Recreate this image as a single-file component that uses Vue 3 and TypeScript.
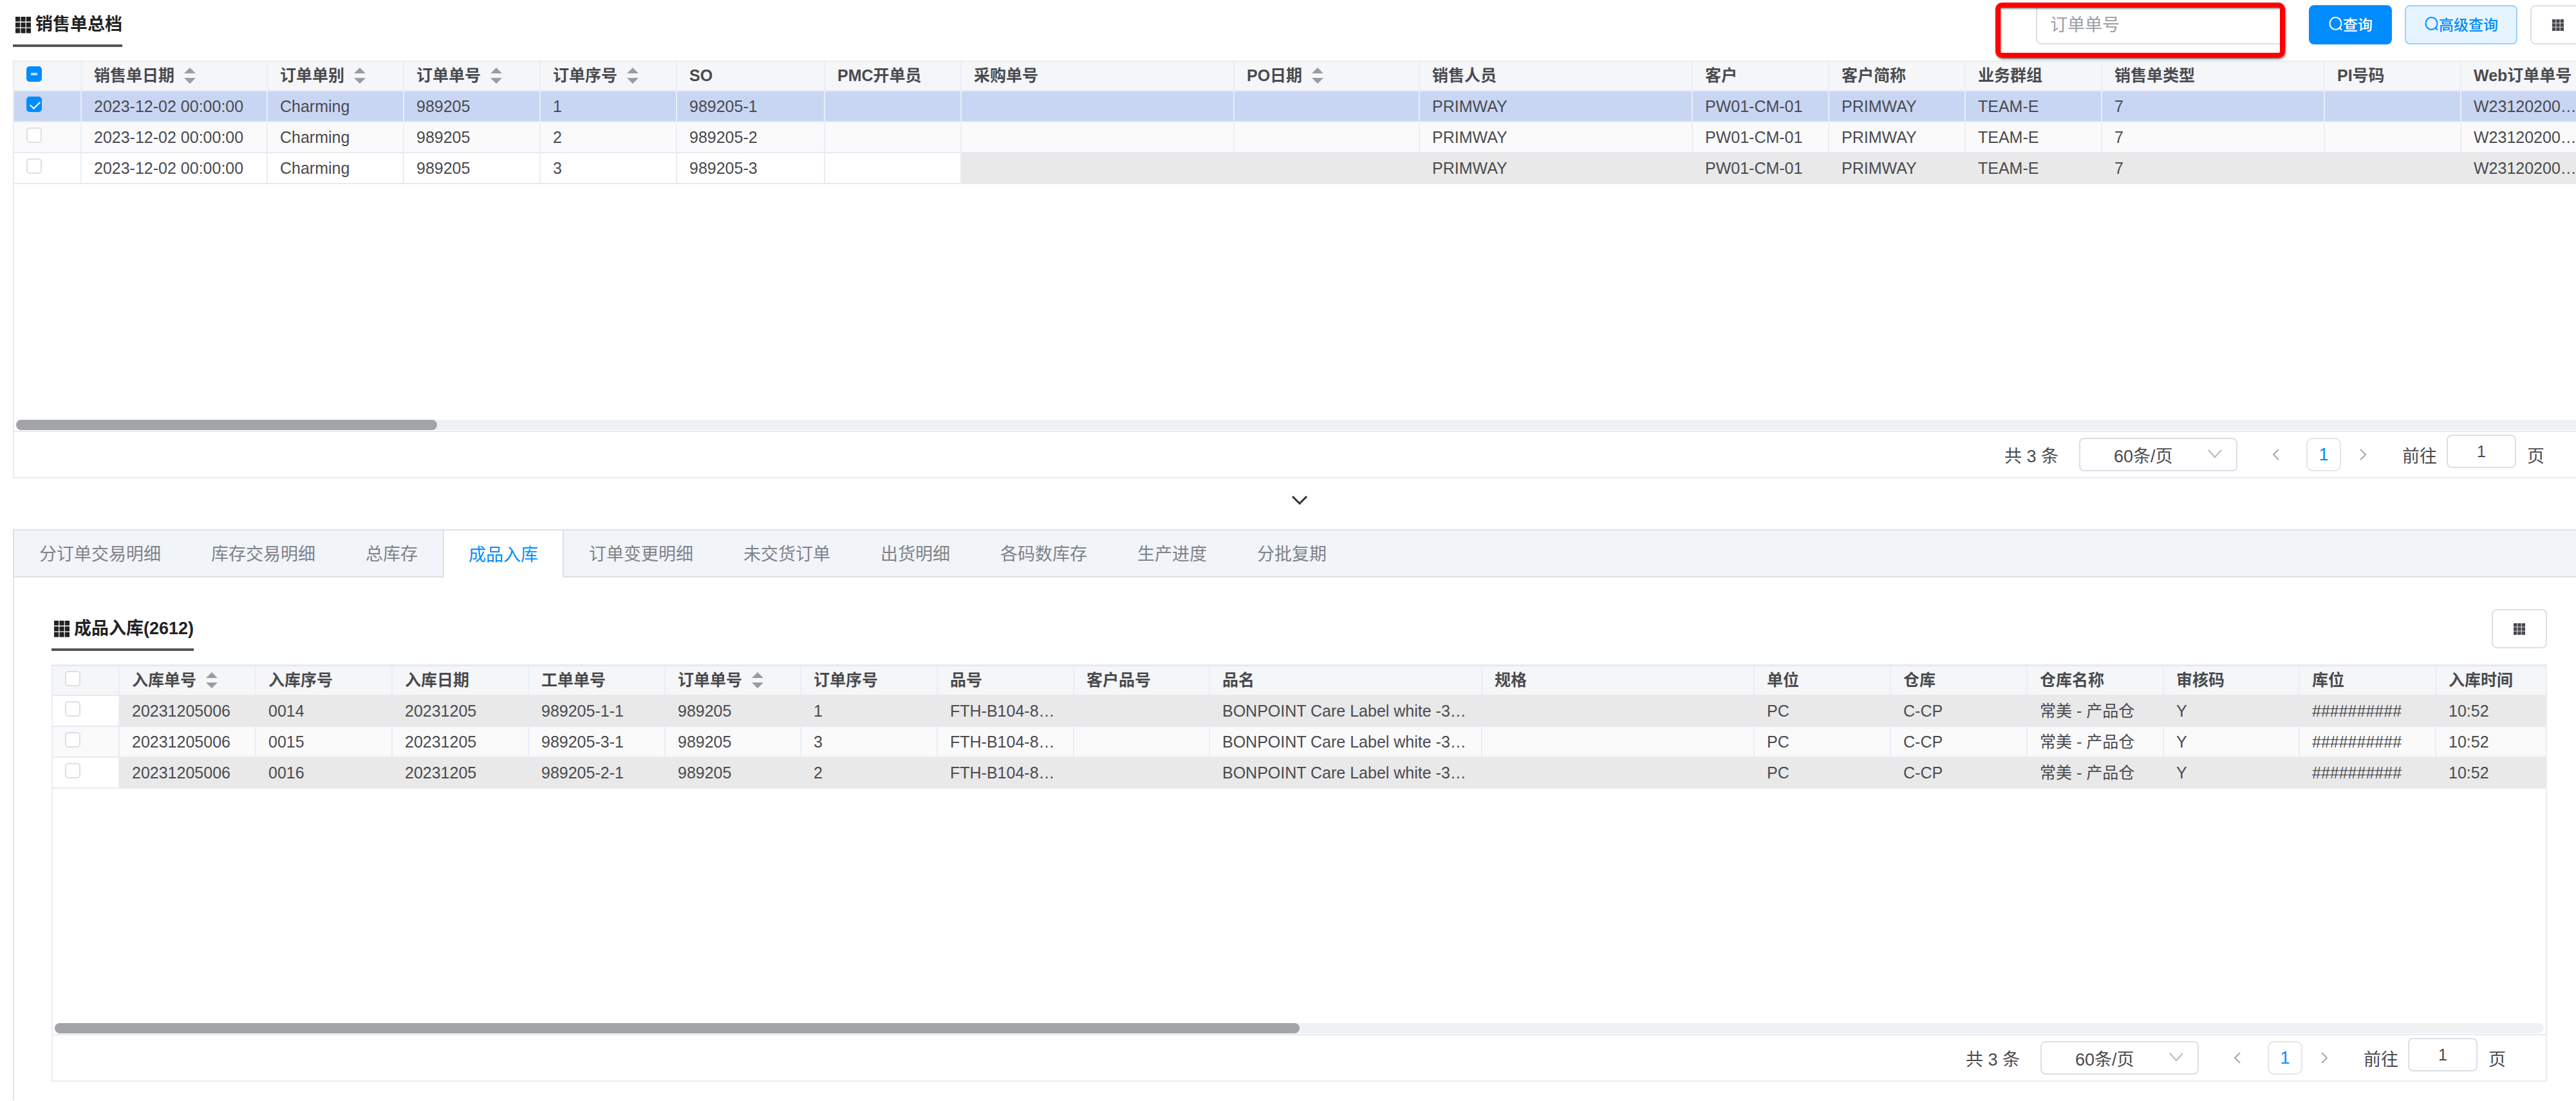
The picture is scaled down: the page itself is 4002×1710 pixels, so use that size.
<script setup lang="ts">
import { ref } from 'vue'

interface Column {
  title: string
  width: number
  sortable?: boolean
}

interface Row {
  cells: string[]
  checked: boolean
  state: 'selected' | 'striped' | 'plain'
  /** index of the first read-only (greyed) column */
  lockedFrom?: number
}

interface Grid {
  id: string
  title: string
  selectWidth: number
  columns: Column[]
  rows: Row[]
  partlySelected: boolean
  thumb: number
}

const orderColumns: Column[] = [
  { title: '销售单日期', width: 289, sortable: true },
  { title: '订单单别', width: 212, sortable: true },
  { title: '订单单号', width: 212, sortable: true },
  { title: '订单序号', width: 212, sortable: true },
  { title: 'SO', width: 230 },
  { title: 'PMC开单员', width: 212 },
  { title: '采购单号', width: 424 },
  { title: 'PO日期', width: 288, sortable: true },
  { title: '销售人员', width: 424 },
  { title: '客户', width: 212 },
  { title: '客户简称', width: 212 },
  { title: '业务群组', width: 212 },
  { title: '销售单类型', width: 346 },
  { title: 'PI号码', width: 212 },
  { title: 'Web订单单号', width: 212 },
]

const orderCells = (n: number): string[] => [
  '2023-12-02 00:00:00', 'Charming', '989205', `${n}`, `989205-${n}`, '', '', '',
  'PRIMWAY', 'PW01-CM-01', 'PRIMWAY', 'TEAM-E', '7', '', 'W23120200…',
]

const stockColumns: Column[] = [
  { title: '入库单号', width: 212, sortable: true },
  { title: '入库序号', width: 212 },
  { title: '入库日期', width: 212 },
  { title: '工单单号', width: 212 },
  { title: '订单单号', width: 211, sortable: true },
  { title: '订单序号', width: 212 },
  { title: '品号', width: 212 },
  { title: '客户品号', width: 211 },
  { title: '品名', width: 423 },
  { title: '规格', width: 423 },
  { title: '单位', width: 212 },
  { title: '仓库', width: 212 },
  { title: '仓库名称', width: 212 },
  { title: '审核码', width: 211 },
  { title: '库位', width: 212 },
  { title: '入库时间', width: 212 },
]

const stockCells = (serial: string, job: string, line: string): string[] => [
  '20231205006', serial, '20231205', job, '989205', line, 'FTH-B104-8…', '',
  'BONPOINT Care Label white -3…', '', 'PC', 'C-CP', '常美 - 产品仓', 'Y', '##########', '10:52',
]

const grids = ref<Grid[]>([
  {
    id: 'orders',
    title: '销售单总档',
    selectWidth: 105,
    columns: orderColumns,
    partlySelected: true,
    thumb: 16.4,
    rows: [
      { cells: orderCells(1), checked: true, state: 'selected' },
      { cells: orderCells(2), checked: false, state: 'striped' },
      { cells: orderCells(3), checked: false, state: 'plain', lockedFrom: 6 },
    ],
  },
  {
    id: 'stock',
    title: '成品入库(2612)',
    selectWidth: 104,
    columns: stockColumns,
    partlySelected: false,
    thumb: 50,
    rows: [
      { cells: stockCells('0014', '989205-1-1', '1'), checked: false, state: 'plain', lockedFrom: 0 },
      { cells: stockCells('0015', '989205-3-1', '3'), checked: false, state: 'striped' },
      { cells: stockCells('0016', '989205-2-1', '2'), checked: false, state: 'plain', lockedFrom: 0 },
    ],
  },
])

const tabs = [
  '分订单交易明细', '库存交易明细', '总库存', '成品入库', '订单变更明细',
  '未交货订单', '出货明细', '各码数库存', '生产进度', '分批复期',
]
const activeTab = ref('成品入库')
const orderNo = ref('')

const tableWidth = (g: Grid): string =>
  `${g.columns.reduce((sum, c) => sum + c.width, g.selectWidth)}px`
</script>

<template>
  <main class="page">
    <div class="stack">
      <template v-for="(g, gi) in grids" :key="g.id">
        <template v-if="gi === 1">
          <button class="collapse" aria-label="收起">
            <svg viewBox="0 0 26 15" width="26" height="15"><path d="M2 2l11 11L24 2" fill="none" stroke="#303133" stroke-width="3" /></svg>
          </button>
          <nav class="tabs" role="tablist">
            <button
              v-for="t in tabs"
              :key="t"
              role="tab"
              class="tab"
              :class="{ active: t === activeTab }"
              :aria-selected="t === activeTab"
              @click="activeTab = t"
            >{{ t }}</button>
          </nav>
        </template>

        <section :class="['panel', g.id]">
          <header class="toolbar">
            <h2 class="title">
              <svg class="title-icon" viewBox="0 0 27 27">
                <path d="M4 1h7.200v7.600H4zM12.400 1h7.200v7.600h-7.200zM20.800 1H28v7.600h-7.200zM4 9.900h7.200v7.600H4zM12.400 9.900h7.200v7.600h-7.200zM20.800 9.900H28v7.600h-7.200zM4 18.800h7.200v7.600H4zM12.400 18.800h7.200v7.600h-7.200zM20.800 18.800H28v7.600h-7.200z" fill="#222" />
              </svg>
              <span>{{ g.title }}</span>
            </h2>
            <div class="actions">
              <template v-if="gi === 0">
                <div class="search">
                  <input v-model="orderNo" class="search-input" type="text" placeholder="订单单号" aria-label="订单单号" />
                  <span class="marker"></span>
                </div>
                <button class="btn primary">
                  <svg viewBox="0 0 23 23" width="23" height="23"><path d="M17.500 18l3.500 3.500M11.500 2a9 9.500 0 1 1 0 19a9 9.500 0 1 1 0-19z" fill="none" stroke="currentColor" stroke-width="2" /></svg>查询
                </button>
                <button class="btn plain">
                  <svg viewBox="0 0 23 23" width="23" height="23"><path d="M17.500 18l3.500 3.500M11.500 2a9 9.500 0 1 1 0 19a9 9.500 0 1 1 0-19z" fill="none" stroke="currentColor" stroke-width="2" /></svg>高级查询
                </button>
              </template>
              <button class="btn square" aria-label="列设置">
                <svg viewBox="0 0 18 18" width="18" height="18">
                  <path d="M0 0h5.400v5.400H0zM6.300 0h5.400v5.400H6.300zM12.600 0H18v5.400h-5.400zM0 6.300h5.400v5.400H0zM6.300 6.300h5.400v5.400H6.300zM12.600 6.300H18v5.400h-5.400zM0 12.600h5.400V18H0zM6.300 12.600h5.400V18H6.300zM12.600 12.600H18V18h-5.400z" fill="#46484c" />
                </svg>
              </button>
            </div>
          </header>

          <div class="grid">
            <div class="grid-body">
              <table :style="{ width: tableWidth(g) }">
                <colgroup>
                  <col :style="{ width: g.selectWidth + 'px' }" />
                  <col v-for="c in g.columns" :key="c.title" :style="{ width: c.width + 'px' }" />
                </colgroup>
                <thead>
                  <tr>
                    <th class="pick"><input type="checkbox" class="check" aria-label="全选" :indeterminate="g.partlySelected" /></th>
                    <th v-for="c in g.columns" :key="c.title" scope="col">
                      <div class="head">
                        <span>{{ c.title }}</span>
                        <button v-if="c.sortable" class="sort" :aria-label="c.title + '排序'">
                          <svg viewBox="0 0 18 25" width="18" height="25"><path d="M9 0l9 9H0zM9 25l9-9H0z" fill="#999ca3" /></svg>
                        </button>
                      </div>
                    </th>
                  </tr>
                </thead>
                <tbody>
                  <tr v-for="(r, ri) in g.rows" :key="ri" :class="r.state">
                    <td class="pick"><input v-model="r.checked" type="checkbox" class="check" :aria-label="'选择第' + (ri + 1) + '行'" /></td>
                    <td
                      v-for="(cell, ci) in r.cells"
                      :key="ci"
                      :class="{ locked: r.lockedFrom !== undefined && ci >= r.lockedFrom }"
                    >{{ cell }}</td>
                  </tr>
                </tbody>
              </table>
              <div class="track"><div class="thumb" :style="{ width: g.thumb + '%' }"></div></div>
            </div>

            <footer class="pager">
              <span class="total">共 3 条</span>
              <span class="size">
                <select aria-label="每页条数"><option>60条/页</option></select>
                <svg viewBox="0 0 22 14" width="22" height="14"><path d="M1 1l10 11L21 1" fill="none" stroke="#b4b8c0" stroke-width="2" /></svg>
              </span>
              <button class="step prev" aria-label="上一页"><svg viewBox="0 0 10 18" width="10" height="18"><path d="M9 1L1 9l8 8" fill="none" stroke="#a4a7ad" stroke-width="2" /></svg></button>
              <button class="current">1</button>
              <button class="step next" aria-label="下一页"><svg viewBox="0 0 10 18" width="10" height="18"><path d="M1 1l8 8l-8 8" fill="none" stroke="#a4a7ad" stroke-width="2" /></svg></button>
              <label :for="g.id + '-page'">前往</label>
              <input :id="g.id + '-page'" class="goto" type="text" value="1" />
              <span>页</span>
            </footer>
          </div>
        </section>
      </template>
    </div>
  </main>
</template>

<style>
body {
  background: #fff;
}
</style>

<style scoped>
.page {
  overflow: hidden;
  color: #4a4b4f;
  font-family: "Liberation Sans", "Noto Sans CJK SC", sans-serif;
  font-size: 25px;
}
.page * {
  box-sizing: border-box;
}
.stack {
  margin: 0 -15px 0 20px;
}
button,
input,
select {
  margin: 0;
  padding: 0;
  border: 0;
  background: none;
  color: inherit;
  font: inherit;
}
svg {
  display: block;
  flex: none;
}

/* toolbar */
.toolbar {
  display: flex;
  justify-content: space-between;
  align-items: flex-start;
  padding: 8px 0 21px;
}
.title {
  display: flex;
  align-items: center;
  gap: 8px;
  margin: 0;
  height: 65px;
  border-bottom: 4px solid #555;
  color: #222;
  font-size: 27px;
  line-height: 61px;
}
.title-icon {
  width: 27px;
  height: 27px;
  overflow: visible;
}
.actions {
  display: flex;
  gap: 20px;
}
.search {
  position: relative;
  margin-right: 20px;
}
.search-input {
  display: block;
  width: 384px;
  height: 61px;
  padding: 2px 20px 0;
  border: 2px solid #dcdfe6;
  border-radius: 8px;
  font-size: 27px;
}
.search-input::placeholder {
  color: #9c9ea3;
  opacity: 1;
}
.marker {
  position: absolute;
  top: -4px;
  right: -3px;
  width: 450px;
  height: 86px;
  border: 8px solid #f00;
  border-radius: 10px;
  box-shadow: 1px 2px 3px rgba(0, 0, 0, 0.5), inset 1px 2px 2px rgba(0, 0, 0, 0.4);
  pointer-events: none;
}
.btn {
  display: flex;
  align-items: center;
  justify-content: center;
  height: 61px;
  padding: 0 28px 4px;
  border: 2px solid #dcdfe6;
  border-radius: 8px;
  font-size: 23px;
  font-weight: 500;
  white-space: nowrap;
}
.btn.primary {
  border-color: #008cff;
  background: #008cff;
  color: #fff;
}
.btn.plain {
  border-color: #99d1ff;
  background: #e6f4ff;
  color: #008cff;
}
.btn.square {
  width: 86px;
  padding: 0;
}

/* grid */
.grid {
  border: 2px solid #e9ecf2;
}
.grid-body {
  display: flex;
  flex-direction: column;
  min-height: 573px;
  overflow: hidden;
  border-bottom: 2px solid #e6e9f5;
}
.orders .grid-body {
  min-height: 575px;
}
table {
  flex: none;
  table-layout: fixed;
  border-collapse: separate;
  border-spacing: 0;
}
th,
td {
  height: 48px;
  padding: 0 18px 0 19px;
  border-right: 2px solid #e9edf7;
  border-bottom: 2px solid #e6eaf4;
  line-height: 30px;
  text-align: left;
  white-space: nowrap;
  overflow: hidden;
}
th {
  height: 46px;
  padding: 0 0 2px 19px;
  background: #f5f6f8;
  color: #4a4b4f;
}
.head {
  display: flex;
  align-items: center;
  gap: 15px;
}
.selected td {
  background: #c9d6f3;
}
.striped td {
  background: #fafafa;
}
.plain td.locked {
  border-right-color: #e8e9ec;
  background: #e9e9e9;
}
td.pick,
th.pick {
  padding: 0 0 6px 19px;
}
.check {
  display: block;
  position: relative;
  width: 24px;
  height: 24px;
  border: 2px solid #dcdfe6;
  border-radius: 5px;
  background: #fff;
  appearance: none;
}
.check:checked,
.check:indeterminate {
  border-color: #008cff;
  background: #008cff;
}
.check:checked::before {
  content: "";
  position: absolute;
  top: 2px;
  left: 7px;
  width: 7px;
  height: 13px;
  border: solid #fff;
  border-width: 0 2px 2px 0;
  transform: rotate(45deg);
}
.check:indeterminate::before {
  content: "";
  position: absolute;
  top: 8px;
  left: 5px;
  width: 10px;
  height: 4px;
  background: #b3dcff;
}
.track {
  height: 16px;
  margin: auto 3px 1px 3px;
  border-radius: 8px;
  background: #f0f1f3;
}
.thumb {
  height: 16px;
  border-radius: 8px;
  background: #a3a4a6;
}

/* pager */
.pager {
  display: flex;
  align-items: center;
  justify-content: flex-end;
  height: 70px;
  padding-right: 62px;
  font-size: 27px;
  white-space: nowrap;
}
.size {
  position: relative;
  margin: 0 46px 0 32px;
}
.size select {
  display: block;
  width: 246px;
  height: 52px;
  padding: 6px 40px 0 52px;
  border: 2px solid #dcdfe6;
  border-radius: 8px;
  appearance: none;
}
.size svg {
  position: absolute;
  top: 18px;
  right: 24px;
  pointer-events: none;
}
.step {
  display: flex;
  justify-content: center;
  width: 28px;
}
.current {
  width: 54px;
  height: 52px;
  margin: 0 20px 0 33px;
  border: 2px solid #e4e5e8;
  border-radius: 10px;
  color: #008cff;
}
.next {
  margin-right: 47px;
}
.goto {
  width: 108px;
  height: 52px;
  margin: 0 17px 10px 15px;
  border: 2px solid #dcdfe6;
  border-radius: 8px;
  font-size: 25px;
  text-align: center;
}

/* lower half */
.collapse {
  display: flex;
  align-items: center;
  justify-content: center;
  width: 100%;
  height: 79px;
  padding-bottom: 12px;
}
.tabs {
  display: flex;
  border: solid #dce0e8;
  border-width: 2px 0 2px 2px;
  background: #f1f4f9;
}
.tab {
  height: 71px;
  padding: 3px 39px 0;
  color: #7f8288;
  font-size: 27px;
  line-height: 68px;
  white-space: nowrap;
}
.tab.active {
  height: 73px;
  margin-bottom: -2px;
  padding: 2px 38px 0;
  border: solid #dce0e8;
  border-width: 0 2px;
  background: #fff;
  color: #008cff;
}
.stock {
  padding: 41px 60px 29px 58px;
  border-left: 2px solid #e2e5f0;
}
.stock .grid {
  border-top: 3px solid #e4eaf4;
}
</style>
